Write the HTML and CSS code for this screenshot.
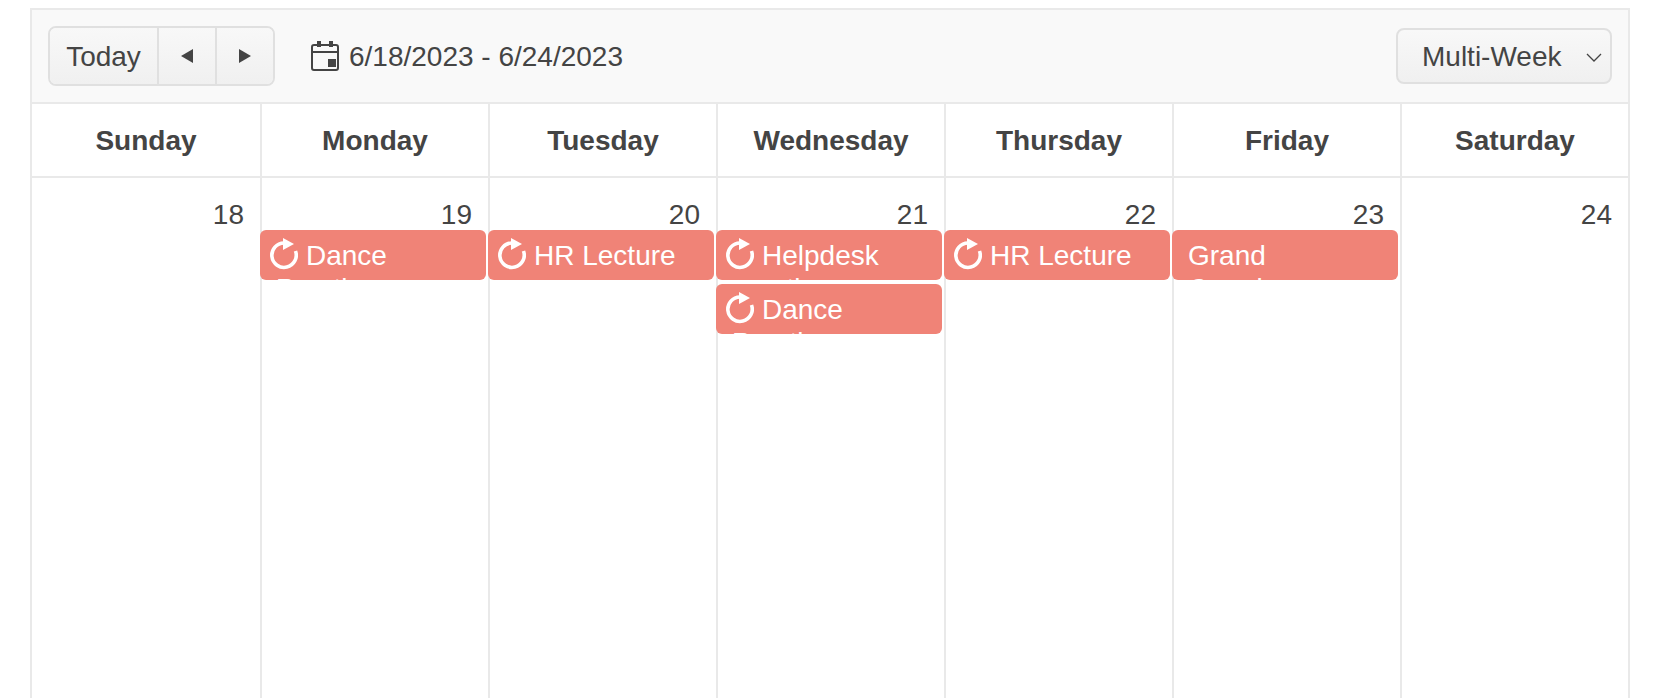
FILE: index.html
```html
<!DOCTYPE html>
<html lang="en">
<head>
    <meta charset="UTF-8">
    <meta name="viewport" content="width=device-width, initial-scale=1.0">
    <title>Calendar</title>
    <link rel="stylesheet" href="styles.css">
</head>
<body>
    <div class="calendar">
        <div class="toolbar">
            <div class="btn-group">
                <button class="btn btn-today">Today</button>
                <button class="btn btn-nav" aria-label="Previous">
                    <svg width="12" height="14" viewBox="0 0 12 14"><path d="M12 0V14L0 7Z"/></svg>
                </button>
                <button class="btn btn-nav" aria-label="Next">
                    <svg width="12" height="14" viewBox="0 0 12 14"><path d="M0 0V14L12 7Z"/></svg>
                </button>
            </div>
            <div class="date-range">
                <svg class="cal-icon" width="28" height="30" viewBox="0 0 28 30">
                    <rect x="1" y="4" width="26" height="25" rx="2" fill="none" stroke="#444" stroke-width="2"/>
                    <path d="M1 11H27" stroke="#444" stroke-width="2"/>
                    <path d="M6 0H10V6H6ZM18 0H22V6H18ZM17 18H25V26H17Z" fill="#444"/>
                </svg>
                <span>6/18/2023 - 6/24/2023</span>
            </div>
            <div class="view-select">
                <span>Multi-Week</span>
                <svg width="16" height="9" viewBox="0 0 16 9"><path d="M1 1L8 8L15 1" fill="none" stroke="#444" stroke-width="1.3"/></svg>
            </div>
        </div>

        <div class="week-header">
            <div class="day-name">Sunday</div>
            <div class="day-name">Monday</div>
            <div class="day-name">Tuesday</div>
            <div class="day-name">Wednesday</div>
            <div class="day-name">Thursday</div>
            <div class="day-name">Friday</div>
            <div class="day-name">Saturday</div>
        </div>

        <div class="week-body">
            <div class="day">
                <div class="day-num">18</div>
            </div>
            <div class="day">
                <div class="day-num">19</div>
                <div class="event"><svg class="repeat" viewBox="0 0 28 32"><path d="M14 5A12.2 12.2 0 1 0 25.5 13" fill="none" stroke="#fff" stroke-width="3.6"/><path d="M13 0L24 6L13 12Z" fill="#fff"/></svg>Dance Practice</div>
            </div>
            <div class="day">
                <div class="day-num">20</div>
                <div class="event"><svg class="repeat" viewBox="0 0 28 32"><path d="M14 5A12.2 12.2 0 1 0 25.5 13" fill="none" stroke="#fff" stroke-width="3.6"/><path d="M13 0L24 6L13 12Z" fill="#fff"/></svg>HR Lecture</div>
            </div>
            <div class="day">
                <div class="day-num">21</div>
                <div class="event"><svg class="repeat" viewBox="0 0 28 32"><path d="M14 5A12.2 12.2 0 1 0 25.5 13" fill="none" stroke="#fff" stroke-width="3.6"/><path d="M13 0L24 6L13 12Z" fill="#fff"/></svg>Helpdesk meeting</div>
                <div class="event"><svg class="repeat" viewBox="0 0 28 32"><path d="M14 5A12.2 12.2 0 1 0 25.5 13" fill="none" stroke="#fff" stroke-width="3.6"/><path d="M13 0L24 6L13 12Z" fill="#fff"/></svg>Dance Practice</div>
            </div>
            <div class="day">
                <div class="day-num">22</div>
                <div class="event"><svg class="repeat" viewBox="0 0 28 32"><path d="M14 5A12.2 12.2 0 1 0 25.5 13" fill="none" stroke="#fff" stroke-width="3.6"/><path d="M13 0L24 6L13 12Z" fill="#fff"/></svg>HR Lecture</div>
            </div>
            <div class="day">
                <div class="day-num">23</div>
                <div class="event">Grand Opening</div>
            </div>
            <div class="day">
                <div class="day-num">24</div>
            </div>
        </div>
    </div>
</body>
</html>
```

FILE: styles.css
```css
html, body {
    height: 100%;
    overflow: hidden;
}
body {
    font-family: "Liberation Sans", Arial, sans-serif;
    font-size: 28px;
    color: #444;
    margin: 0;
    padding: 8px 38px 0 30px;
    background-color: white;
    box-sizing: border-box;
}
.calendar {
    display: flex;
    flex-direction: column;
    height: 100%;
    box-sizing: border-box;
    border: 2px solid #e9e9e9;
    border-bottom: none;
}
.toolbar {
    display: flex;
    align-items: center;
    height: 92px;
    padding: 0 16px;
    background-color: #f9f9f9;
    border-bottom: 2px solid #e9e9e9;
    flex-shrink: 0;
}
.btn-group {
    display: flex;
    box-sizing: border-box;
    height: 60px;
    border: 2px solid #e0e0e0;
    border-radius: 8px;
    overflow: hidden;
}
.btn {
    font: inherit;
    color: inherit;
    border: none;
    padding: 0;
    background: linear-gradient(#f8f8f8, #f0f0f0);
    display: flex;
    align-items: center;
    justify-content: center;
}
.btn-today {
    width: 107px;
    padding-top: 2px;
}
.btn-nav {
    width: 58px;
    border-left: 2px solid #e0e0e0;
}
.btn-nav svg {
    fill: #444;
}
.date-range {
    display: flex;
    align-items: center;
    gap: 10px;
    margin-left: 36px;
}
.date-range span {
    padding-top: 2px;
}
.view-select {
    display: flex;
    align-items: center;
    justify-content: space-between;
    box-sizing: border-box;
    width: 216px;
    height: 56px;
    margin-left: auto;
    padding: 2px 8px 0 24px;
    border: 2px solid #e0e0e0;
    border-radius: 8px;
    background: linear-gradient(#f8f8f8, #f0f0f0);
}
.week-header, .week-body {
    display: grid;
    grid-template-columns: repeat(7, 1fr);
}
.week-header {
    height: 72px;
    border-bottom: 2px solid #e9e9e9;
    flex-shrink: 0;
}
.week-body {
    flex: 1;
}
.day-name {
    display: flex;
    align-items: center;
    justify-content: center;
    padding-top: 2px;
    font-weight: bold;
}
.day-name + .day-name, .day + .day {
    border-left: 2px solid #e9e9e9;
}
.day-num {
    text-align: right;
    padding: 22px 16px 0 0;
    line-height: 30px;
}
.day-num + .event {
    margin-top: 0;
}
.event {
    height: 50px;
    box-sizing: border-box;
    margin: 4px 2px 0 -2px;
    padding: 9px 24px 0 16px;
    background-color: #f08377;
    color: white;
    border-radius: 6px;
    line-height: 33px;
    overflow: hidden;
}
.repeat {
    width: 28px;
    height: 32px;
    margin: -4px 8px -4px -6px;
    vertical-align: -1px;
}
```
